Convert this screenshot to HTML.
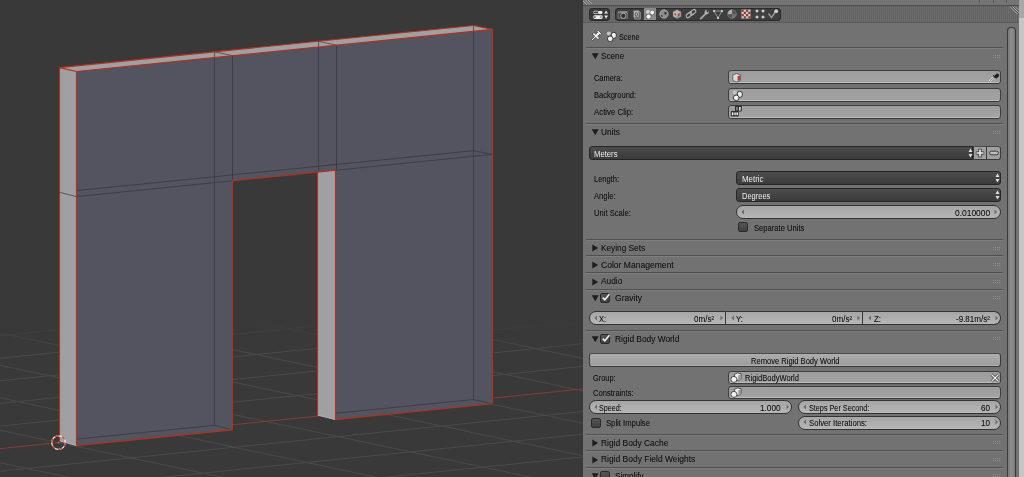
<!DOCTYPE html>
<html><head><meta charset="utf-8"><style>
html,body{margin:0;padding:0}
body{width:1024px;height:477px;overflow:hidden;position:relative;background:#393939;font-family:"Liberation Sans",sans-serif}
.t{position:absolute;white-space:nowrap;line-height:1;transform-origin:0 0;text-shadow:0 0 0.5px rgba(0,0,0,0.35)}
#panel{position:absolute;left:583px;top:0;width:441px;height:477px;background:#727272;overflow:hidden}
</style></head><body>
<svg width="583" height="477" style="position:absolute;left:0;top:0">
<defs><linearGradient id="gf" x1="0" y1="0" x2="0" y2="477" gradientUnits="userSpaceOnUse">
<stop offset="0" stop-color="#fff" stop-opacity="0"/><stop offset="0.667" stop-color="#fff" stop-opacity="0"/><stop offset="0.738" stop-color="#fff" stop-opacity="1"/><stop offset="1" stop-color="#fff" stop-opacity="1"/></linearGradient>
<mask id="gm"><rect width="583" height="477" fill="url(#gf)"/></mask></defs>
<rect width="583" height="477" fill="#393939"/>
<g mask="url(#gm)" stroke="#4a4a4a" stroke-width="1"><line x1="-2041.5" y1="387.6" x2="-320.7" y2="754.4"/><line x1="-1938.3" y1="377.0" x2="-216.6" y2="743.8"/><line x1="-1835.1" y1="366.5" x2="-112.4" y2="733.1"/><line x1="-1731.9" y1="355.9" x2="-8.3" y2="722.4"/><line x1="-1628.7" y1="345.3" x2="95.9" y2="711.7"/><line x1="-1525.5" y1="334.7" x2="200.0" y2="701.0"/><line x1="-1422.4" y1="324.2" x2="304.1" y2="690.4"/><line x1="-1319.2" y1="313.6" x2="408.3" y2="679.7"/><line x1="-1216.0" y1="303.0" x2="512.4" y2="669.0"/><line x1="-1112.9" y1="292.5" x2="616.5" y2="658.3"/><line x1="-1009.7" y1="281.9" x2="720.6" y2="647.7"/><line x1="-906.5" y1="271.3" x2="824.8" y2="637.0"/><line x1="-803.4" y1="260.8" x2="928.9" y2="626.3"/><line x1="-700.2" y1="250.2" x2="1033.0" y2="615.6"/><line x1="-597.1" y1="239.6" x2="1137.1" y2="604.9"/><line x1="-494.0" y1="229.1" x2="1241.2" y2="594.3"/><line x1="-390.8" y1="218.5" x2="1345.3" y2="583.6"/><line x1="-287.7" y1="207.9" x2="1449.4" y2="572.9"/><line x1="-184.6" y1="197.4" x2="1553.5" y2="562.3"/><line x1="-81.4" y1="186.8" x2="1657.6" y2="551.6"/><line x1="21.7" y1="176.2" x2="1761.6" y2="540.9"/><line x1="124.8" y1="165.7" x2="1865.7" y2="530.2"/><line x1="227.9" y1="155.1" x2="1969.8" y2="519.6"/><line x1="331.0" y1="144.5" x2="2073.9" y2="508.9"/><line x1="434.2" y1="134.0" x2="2177.9" y2="498.2"/><line x1="537.3" y1="123.4" x2="2282.0" y2="487.5"/><line x1="640.4" y1="112.8" x2="2386.1" y2="476.9"/><line x1="743.5" y1="102.3" x2="2490.1" y2="466.2"/><line x1="846.6" y1="91.7" x2="2594.2" y2="455.5"/><line x1="949.7" y1="81.2" x2="2698.2" y2="444.9"/><line x1="1052.7" y1="70.6" x2="2802.3" y2="434.2"/><line x1="1155.8" y1="60.0" x2="2906.3" y2="423.5"/><line x1="-2041.5" y1="387.6" x2="1258.9" y2="49.5"/><line x1="-1970.4" y1="402.7" x2="1331.2" y2="64.5"/><line x1="-1899.3" y1="417.9" x2="1403.6" y2="79.5"/><line x1="-1828.2" y1="433.1" x2="1476.0" y2="94.5"/><line x1="-1757.0" y1="448.3" x2="1548.5" y2="109.6"/><line x1="-1685.7" y1="463.4" x2="1621.0" y2="124.6"/><line x1="-1614.4" y1="478.7" x2="1693.6" y2="139.7"/><line x1="-1543.0" y1="493.9" x2="1766.3" y2="154.7"/><line x1="-1471.5" y1="509.1" x2="1839.0" y2="169.8"/><line x1="-1400.0" y1="524.3" x2="1911.8" y2="184.9"/><line x1="-1328.5" y1="539.6" x2="1984.6" y2="200.0"/><line x1="-1256.9" y1="554.9" x2="2057.5" y2="215.2"/><line x1="-1113.5" y1="585.4" x2="2203.4" y2="245.4"/><line x1="-1041.7" y1="600.7" x2="2276.5" y2="260.6"/><line x1="-969.9" y1="616.0" x2="2349.6" y2="275.8"/><line x1="-898.0" y1="631.4" x2="2422.8" y2="291.0"/><line x1="-826.0" y1="646.7" x2="2496.0" y2="306.2"/><line x1="-754.0" y1="662.1" x2="2569.3" y2="321.4"/><line x1="-681.9" y1="677.4" x2="2642.7" y2="336.6"/><line x1="-609.8" y1="692.8" x2="2716.1" y2="351.8"/><line x1="-537.6" y1="708.2" x2="2789.6" y2="367.1"/><line x1="-465.4" y1="723.6" x2="2863.1" y2="382.3"/><line x1="-393.1" y1="739.0" x2="2936.7" y2="397.6"/></g>
<line x1="-1185.2" y1="570.1" x2="2130.4" y2="230.3" stroke="#8a3a36" stroke-width="1"/>
<polygon points="76.5,71.5 492.5,29.4 492.5,403.8 335.5,419.6 335.5,170.3 232.5,180.8 232.5,429.9 76.5,445.6" fill="#53545f"/><polygon points="59.5,67.6 76.5,71.5 76.5,445.6 59.5,440.8" fill="#a0a0a2"/><polygon points="59.5,67.6 473.5,25.5 492.5,29.4 76.5,71.5" fill="#a0a0a2"/><polygon points="317.5,172.1 335.5,170.3 335.5,419.6 317.5,415.1" fill="#a0a0a2"/>
<g stroke="#34343a" stroke-opacity="0.75" stroke-width="0.9"><line x1="214.5" y1="51.8" x2="214.5" y2="425.3"/><line x1="232.5" y1="55.7" x2="232.5" y2="180.8"/><line x1="318.5" y1="41.3" x2="318.5" y2="172.0"/><line x1="336.5" y1="45.2" x2="336.5" y2="170.2"/><line x1="473.5" y1="25.5" x2="473.5" y2="399.5"/><line x1="76.5" y1="439.1" x2="214.5" y2="425.3"/><line x1="214.5" y1="425.3" x2="232.5" y2="429.9"/><line x1="335.5" y1="413.3" x2="473.5" y2="399.5"/><line x1="473.5" y1="399.5" x2="492.5" y2="403.8"/><line x1="76.5" y1="190.6" x2="473.4" y2="150.7"/><line x1="59.5" y1="192.3" x2="76.5" y2="196.6"/><line x1="76.5" y1="196.6" x2="232.5" y2="180.8"/><line x1="335.5" y1="170.3" x2="492.0" y2="154.4"/><line x1="473.4" y1="150.7" x2="492.0" y2="154.4"/><line x1="214.5" y1="51.8" x2="232.5" y2="55.7"/><line x1="318.5" y1="41.3" x2="336.5" y2="45.2"/></g>
<g stroke="#b8b8b8" stroke-width="1"><line x1="59.5" y1="440.8" x2="76.5" y2="445.6"/><line x1="317.5" y1="415.1" x2="335.5" y2="419.6"/></g>
<g stroke="#b3301f" stroke-width="1.1"><line x1="59.5" y1="67.6" x2="59.5" y2="440.8"/><line x1="76.5" y1="71.5" x2="76.5" y2="445.6"/><line x1="59.5" y1="67.6" x2="76.5" y2="71.5"/><line x1="59.5" y1="67.6" x2="473.5" y2="25.5"/><line x1="76.5" y1="71.5" x2="492.5" y2="29.4"/><line x1="492.5" y1="29.4" x2="492.5" y2="403.8"/><line x1="473.5" y1="25.5" x2="492.5" y2="29.4"/><line x1="76.5" y1="445.6" x2="232.5" y2="429.9"/><line x1="232.5" y1="429.9" x2="232.5" y2="180.8"/><line x1="232.5" y1="180.8" x2="317.5" y2="172.1"/><line x1="317.5" y1="415.1" x2="317.5" y2="172.1"/><line x1="335.5" y1="419.6" x2="335.5" y2="170.3"/><line x1="335.5" y1="419.6" x2="492.5" y2="403.8"/><line x1="317.5" y1="172.1" x2="335.5" y2="170.3"/></g>
<circle cx="58.5" cy="442.6" r="6.8" fill="none" stroke="#e8e8e8" stroke-width="1.2"/>
<circle cx="58.5" cy="442.6" r="6.8" fill="none" stroke="#c83828" stroke-width="1.2" stroke-dasharray="3.56 3.56"/>
<circle cx="58.5" cy="442.6" r="1" fill="#d06050"/>
</svg>
<div id="panel">
<div style="position:absolute;left:0.00px;top:0.00px;width:436.00px;height:5.50px;box-sizing:border-box;background:#757575"></div>
<div style="position:absolute;left:0.00px;top:5.00px;width:436.00px;height:18.00px;box-sizing:border-box;background:repeating-linear-gradient(90deg,#626262 0 1px,#6c6c6c 1px 2px);border-top:1px solid #4c4c4c;border-bottom:1px solid #5a5a5a"></div>
<svg style="position:absolute;left:0.00px;top:0.00px;overflow:visible" width="10" height="6"><path d="M0 1 L4 5 M2.5 0 L7.5 5 M5 0 L9 4" stroke="#b8b8b8" stroke-width="0.8"/><path d="M0 2.2 L3 5.2 M3.5 -0.2 L8.5 4.8" stroke="#4a4a4a" stroke-width="0.6"/></svg>
<svg style="position:absolute;left:426.00px;top:5.50px;overflow:visible" width="10" height="9"><path d="M1 0.5 L8.5 8 M3.5 0.5 L9.5 6.5 M6 0.5 L9.5 4" stroke="#c8c8c8" stroke-width="0.8"/><path d="M2.2 0.5 L9 7.3 M4.8 0.5 L9.5 5.2" stroke="#3a3a3a" stroke-width="0.6"/></svg>
<div style="position:absolute;left:395.50px;top:0.00px;width:0.80px;height:3.00px;box-sizing:border-box;background:#5a5a5a"></div>
<div style="position:absolute;left:409.50px;top:0.00px;width:0.80px;height:3.00px;box-sizing:border-box;background:#5a5a5a"></div>
<div style="position:absolute;left:422.50px;top:0.00px;width:0.80px;height:3.00px;box-sizing:border-box;background:#5a5a5a"></div>
<div style="position:absolute;left:6.00px;top:7.50px;width:21.00px;height:13.00px;box-sizing:border-box;border-radius:3px;background:#3a3a3a;border:1px solid #2a2a2a"></div>
<div style="position:absolute;left:32.00px;top:7.50px;width:166.00px;height:13.00px;box-sizing:border-box;border-radius:3px;background:#3e3e3e;border:1px solid #2a2a2a"></div>
<div style="position:absolute;left:60.90px;top:8.30px;width:12.00px;height:12.00px;box-sizing:border-box;background:#8c8c8c"></div>
<svg style="position:absolute;left:6.50px;top:7.80px;overflow:visible" width="21" height="13"><rect x="3.6" y="3.2" width="5.2" height="2.4" rx="1.2" fill="none" stroke="#cfcfcf" stroke-width="0.9"/><rect x="8.2" y="2.9" width="4.2" height="3" rx="1.2" fill="#ededed"/><rect x="3.4" y="7.2" width="9.2" height="3.8" rx="1.4" fill="#ededed"/><rect x="4.3" y="8.2" width="1.2" height="1.8" fill="#333"/><rect x="10.3" y="8.2" width="1.2" height="1.8" fill="#777"/><path d="M16.1 2.4 L18 5.6 L14.2 5.6Z M16.1 10.8 L18 7.6 L14.2 7.6Z" fill="#e6e6e6"/></svg>
<svg style="position:absolute;left:33.50px;top:8.30px;overflow:visible" width="12" height="12"><rect x="1" y="3.2" width="9.5" height="1.6" fill="#9a9a9a"/><circle cx="2.2" cy="4" r="0.8" fill="#c04030"/><rect x="1" y="5" width="9.5" height="5" fill="none" stroke="#8a8a8a" stroke-width="0.8"/><circle cx="6.3" cy="7.8" r="2.6" fill="#2d2d2d" stroke="#bbbbbb" stroke-width="0.9"/></svg>
<svg style="position:absolute;left:47.20px;top:8.30px;overflow:visible" width="12" height="12"><path d="M3.5 2.5 h5.5 v7 h-5.5z" fill="#b5b5b5" stroke="#666" stroke-width="0.6"/><path d="M9 4 h1.2 v7 h-5.5 v-1.5" fill="none" stroke="#aaa" stroke-width="0.9"/><path d="M6 4.2 q-1.8 2 0 4.6 M6.8 4.2 q1.5 2.2 -0.2 4.5" fill="none" stroke="#444" stroke-width="0.8"/></svg>
<svg style="position:absolute;left:60.90px;top:8.30px;overflow:visible" width="12" height="12"><circle cx="4" cy="4" r="2" fill="#d6d6d6"/><circle cx="8.2" cy="4.5" r="2.4" fill="#f2f2f2" stroke="#333" stroke-width="0.5"/><circle cx="4.6" cy="8.6" r="2.6" fill="#f5f5f5" stroke="#333" stroke-width="0.6"/></svg>
<svg style="position:absolute;left:74.60px;top:8.30px;overflow:visible" width="12" height="12"><circle cx="6" cy="6" r="4.2" fill="#8c8c8c" stroke="#b0b0b0" stroke-width="0.8"/><path d="M6.2 4 q2 -0.5 2.8 1.2 q-0.6 1.6 -2.2 1.2z M3.2 6.8 q1.2 0 1.6 1.6 q-0.8 0.8 -1.6 0z" fill="#333"/></svg>
<svg style="position:absolute;left:88.30px;top:8.30px;overflow:visible" width="12" height="12"><path d="M6 1.8 L10 3.8 L10 8.6 L6 10.6 L2 8.6 L2 3.8Z" fill="#b8b8b8" stroke="#777" stroke-width="0.5"/><path d="M6 6 L10 3.8 L10 8.6 L6 10.6Z" fill="#9a9a9a"/><path d="M3.5 5 l1.5 0.8 v2 l-1.5 -0.8z M7 6 l1.6 -0.8 v2.4 l-1.6 0.8z M5.5 8.6 l1 0.5 v1 l-1 -0.5z" fill="#c8382a"/></svg>
<svg style="position:absolute;left:102.00px;top:8.30px;overflow:visible" width="12" height="12"><rect x="0.8" y="5.2" width="6.4" height="3.6" rx="1.8" transform="rotate(-40 4 7)" fill="none" stroke="#b5b5b5" stroke-width="1.1"/><rect x="4.8" y="2.4" width="6.4" height="3.6" rx="1.8" transform="rotate(-40 8 4.2)" fill="none" stroke="#b5b5b5" stroke-width="1.1"/></svg>
<svg style="position:absolute;left:115.70px;top:8.30px;overflow:visible" width="12" height="12"><path d="M1.8 10.6 L7 5.4" stroke="#a8a8a8" stroke-width="1.9" stroke-linecap="round"/><path d="M6.2 6.2 a2.9 2.9 0 0 1 2.2 -4.8 l-1.2 1.9 l1.3 1.1 l1.6 -1.4 a2.9 2.9 0 0 1 -3.9 3.2z" fill="#b0b0b0"/></svg>
<svg style="position:absolute;left:129.40px;top:8.30px;overflow:visible" width="12" height="12"><path d="M2 3 L10 3 L6 10Z" fill="none" stroke="#aaa" stroke-width="0.8"/><circle cx="2" cy="3" r="1.1" fill="#ddd"/><circle cx="10" cy="3" r="1.1" fill="#ddd"/><circle cx="6" cy="10" r="1.1" fill="#ddd"/></svg>
<svg style="position:absolute;left:143.10px;top:8.30px;overflow:visible" width="12" height="12"><circle cx="6" cy="6" r="4.3" fill="#555" stroke="#8a8a8a" stroke-width="0.6"/><path d="M6 1.7 a4.3 4.3 0 0 0 -4.3 4.3 h4.3z" fill="#b0b0b0"/><path d="M6 6 h4.3 a4.3 4.3 0 0 1 -4.3 4.3z" fill="#777"/><circle cx="7.8" cy="7.6" r="0.9" fill="#c04030"/></svg>
<svg style="position:absolute;left:156.80px;top:8.30px;overflow:visible" width="12" height="12"><rect x="1.5" y="1.5" width="9" height="9" fill="#cfcfcf"/><path d="M1.5 1.5h2.25v2.25h-2.25z M6 1.5h2.25v2.25h-2.25z M3.75 3.75h2.25v2.25h-2.25z M8.25 3.75h2.25v2.25h-2.25z M1.5 6h2.25v2.25h-2.25z M6 6h2.25v2.25h-2.25z M3.75 8.25h2.25v2.25h-2.25z M8.25 8.25h2.25v2.25h-2.25z" fill="#8e3a30"/></svg>
<svg style="position:absolute;left:170.50px;top:8.30px;overflow:visible" width="12" height="12"><path d="M3 0.8v4.4 M0.8 3h4.4 M9 0.8v4.4 M6.8 3h4.4 M3 6.8v4.4 M0.8 9h4.4 M9 6.8v4.4 M6.8 9h4.4" stroke="#b0b0b0" stroke-width="0.8"/><circle cx="3" cy="3" r="1.1" fill="#ddd"/><circle cx="9" cy="3" r="1.1" fill="#ddd"/><circle cx="3" cy="9" r="1.1" fill="#ddd"/><circle cx="9" cy="9" r="1.1" fill="#ddd"/></svg>
<svg style="position:absolute;left:184.20px;top:8.30px;overflow:visible" width="12" height="12"><path d="M1.5 5.5 L4.5 9.5 L9 3" fill="none" stroke="#9a9a9a" stroke-width="1.4"/><circle cx="9.2" cy="3.2" r="1.9" fill="#cfcfcf"/></svg>
<svg style="position:absolute;left:7.00px;top:30.00px;overflow:visible" width="12" height="12"><g transform="rotate(45 6 6)"><path d="M3.6 0.4 h4.8 v1.8 h-1 v2.8 h2.6 v2.2 h-3.2 v4.4 h-1.6 v-4.4 h-3.2 v-2.2 h2.6 v-2.8 h-1z" fill="#f4f4f4" stroke="#2a2a2a" stroke-width="0.7" stroke-linejoin="round"/></g></svg>
<svg style="position:absolute;left:22.50px;top:30.50px;overflow:visible" width="11" height="11"><circle cx="2.8" cy="2.6" r="2" fill="#c4c4c4"/><rect x="5.3" y="1.4" width="5" height="6" rx="2.3" fill="#eeeeee" stroke="#2a2a2a" stroke-width="0.9"/><circle cx="4.2" cy="7.8" r="2.8" fill="#f2f2f2" stroke="#2a2a2a" stroke-width="0.9"/></svg>
<div style="position:absolute;left:423.50px;top:27.00px;width:9.50px;height:450.00px;box-sizing:border-box;border:1px solid #3a3a3a;border-bottom:none;border-radius:4px 4px 0 0;background:linear-gradient(90deg,#7a7a7a,#8e8e8e,#7a7a7a)"></div>
<div style="position:absolute;left:436.00px;top:0.00px;width:5.00px;height:477.00px;box-sizing:border-box;background:#c6c6c6"></div>
<div style="position:absolute;left:436.00px;top:0.00px;width:5.00px;height:18.00px;box-sizing:border-box;background:#a8a8a8"></div>
<div class="t" style="left:36.00px;top:32.67px;font-size:8.3px;color:#141414;transform:scaleX(0.8754)">Scene</div>
<div style="position:absolute;left:3.00px;top:47.00px;width:417.00px;height:1.00px;box-sizing:border-box;background:#505050"></div>
<div style="position:absolute;left:3.00px;top:48.00px;width:417.00px;height:1.00px;box-sizing:border-box;background:#7e7e7e"></div>
<svg style="position:absolute;left:9.00px;top:52.30px" width="8" height="8"><path d="M-0.2 1.3 L6.7 1.3 L3.25 7.3Z" fill="#1e1e1e"/></svg>
<div class="t" style="left:17.80px;top:52.12px;font-size:8.6px;color:#141414;transform:scaleX(0.9515)">Scene</div>
<svg style="position:absolute;left:410.00px;top:55.00px" width="8" height="4"><rect x="0" y="0" width="1" height="1" fill="#8e8e8e"/><rect x="0" y="2" width="1" height="1" fill="#8e8e8e"/><rect x="2" y="0" width="1" height="1" fill="#8e8e8e"/><rect x="2" y="2" width="1" height="1" fill="#8e8e8e"/><rect x="4" y="0" width="1" height="1" fill="#8e8e8e"/><rect x="4" y="2" width="1" height="1" fill="#8e8e8e"/><rect x="6" y="0" width="1" height="1" fill="#8e8e8e"/><rect x="6" y="2" width="1" height="1" fill="#8e8e8e"/></svg>
<div class="t" style="left:10.70px;top:73.87px;font-size:8.3px;color:#141414;transform:scaleX(0.8956)">Camera:</div>
<div class="t" style="left:10.70px;top:90.77px;font-size:8.3px;color:#141414;transform:scaleX(0.9034)">Background:</div>
<div class="t" style="left:10.70px;top:107.77px;font-size:8.3px;color:#141414;transform:scaleX(0.9467)">Active Clip:</div>
<div style="position:absolute;left:145.00px;top:70.00px;width:273.00px;height:14.00px;box-sizing:border-box;border:1px solid #3e3e3e;border-radius:3px;background:linear-gradient(#9d9d9d,#a3a3a3)"></div>
<div style="position:absolute;left:147.00px;top:82.00px;width:269.00px;height:1.00px;box-sizing:border-box;background:#c4c4c4;opacity:0.7"></div>
<div style="position:absolute;left:147.00px;top:84.00px;width:269.00px;height:1.00px;box-sizing:border-box;background:#666;opacity:0.5"></div>
<div style="position:absolute;left:145.00px;top:88.00px;width:273.00px;height:14.00px;box-sizing:border-box;border:1px solid #3e3e3e;border-radius:3px;background:linear-gradient(#9d9d9d,#a3a3a3)"></div>
<div style="position:absolute;left:147.00px;top:100.00px;width:269.00px;height:1.00px;box-sizing:border-box;background:#c4c4c4;opacity:0.7"></div>
<div style="position:absolute;left:147.00px;top:102.00px;width:269.00px;height:1.00px;box-sizing:border-box;background:#666;opacity:0.5"></div>
<div style="position:absolute;left:145.00px;top:105.00px;width:273.00px;height:14.00px;box-sizing:border-box;border:1px solid #3e3e3e;border-radius:3px;background:linear-gradient(#9d9d9d,#a3a3a3)"></div>
<div style="position:absolute;left:147.00px;top:117.00px;width:269.00px;height:1.00px;box-sizing:border-box;background:#c4c4c4;opacity:0.7"></div>
<div style="position:absolute;left:147.00px;top:119.00px;width:269.00px;height:1.00px;box-sizing:border-box;background:#666;opacity:0.5"></div>
<svg style="position:absolute;left:148.80px;top:72.50px;overflow:visible" width="10" height="10"><path d="M4.5 0.5 L8.5 2 L8.5 7.5 L4.5 9 L0.8 7.5 L0.8 2Z" fill="#d8d8d8" stroke="#444" stroke-width="0.7"/><path d="M5.6 3.2 L8 2.4 L8 7 L5.6 8z" fill="#c83a2a"/></svg>
<svg style="position:absolute;left:148.80px;top:89.50px;overflow:visible" width="11" height="11"><circle cx="2.8" cy="2.6" r="2" fill="#c4c4c4"/><rect x="5.3" y="1.4" width="5" height="6" rx="2.3" fill="#eeeeee" stroke="#2a2a2a" stroke-width="0.9"/><circle cx="4.2" cy="7.8" r="2.8" fill="#f2f2f2" stroke="#2a2a2a" stroke-width="0.9"/></svg>
<svg style="position:absolute;left:147.00px;top:105.00px;overflow:visible" width="12" height="12"><rect x="5" y="0.8" width="6.8" height="5.8" rx="0.8" fill="#2e2e2e"/><rect x="6.2" y="2" width="1.4" height="3.4" fill="#9a9a9a"/><rect x="9" y="2" width="1.6" height="3.6" fill="#e8e8e8"/><rect x="0.8" y="6" width="8" height="5.5" rx="0.8" fill="#2e2e2e"/><rect x="1.8" y="7.4" width="1.6" height="2.8" fill="#f0f0f0"/><rect x="4.2" y="7.4" width="1.6" height="2.8" fill="#d8d8d8"/><rect x="6.4" y="7.4" width="1.6" height="2.8" fill="#e8e8e8"/></svg>
<svg style="position:absolute;left:405.30px;top:72.00px;overflow:visible" width="11" height="11"><path d="M1.3 9.7 L6 5" stroke="#eee" stroke-width="1.7"/><path d="M1.3 9.7 L6 5" stroke="#444" stroke-width="0.6"/><path d="M5.2 3.4 L7.6 5.8 M6.4 4.6 L8.8 2.2 a1.2 1.2 0 0 1 1.6 1.6 L8 6.2" fill="#222" stroke="#222" stroke-width="1.3"/></svg>
<div style="position:absolute;left:3.00px;top:122.70px;width:417.00px;height:1.00px;box-sizing:border-box;background:#505050"></div>
<div style="position:absolute;left:3.00px;top:123.70px;width:417.00px;height:1.00px;box-sizing:border-box;background:#7e7e7e"></div>
<svg style="position:absolute;left:9.00px;top:128.00px" width="8" height="8"><path d="M-0.2 1.3 L6.7 1.3 L3.25 7.3Z" fill="#1e1e1e"/></svg>
<div class="t" style="left:17.80px;top:127.72px;font-size:8.6px;color:#141414;transform:scaleX(0.9646)">Units</div>
<svg style="position:absolute;left:410.00px;top:131.00px" width="8" height="4"><rect x="0" y="0" width="1" height="1" fill="#8e8e8e"/><rect x="0" y="2" width="1" height="1" fill="#8e8e8e"/><rect x="2" y="0" width="1" height="1" fill="#8e8e8e"/><rect x="2" y="2" width="1" height="1" fill="#8e8e8e"/><rect x="4" y="0" width="1" height="1" fill="#8e8e8e"/><rect x="4" y="2" width="1" height="1" fill="#8e8e8e"/><rect x="6" y="0" width="1" height="1" fill="#8e8e8e"/><rect x="6" y="2" width="1" height="1" fill="#8e8e8e"/></svg>
<div style="position:absolute;left:6.00px;top:146.00px;width:384.00px;height:14.00px;box-sizing:border-box;border:1px solid #262626;border-radius:3px 0 0 3px;background:linear-gradient(#4d4d4d,#3b3b3b)"></div>
<div class="t" style="left:10.50px;top:149.77px;font-size:8.3px;color:#f4f4f4;transform:scaleX(0.9265)">Meters</div>
<svg style="position:absolute;left:384.50px;top:148.00px" width="5" height="10"><path d="M2.5 0.5 L4.5 4 L0.5 4Z M2.5 9.5 L4.5 6 L0.5 6Z" fill="#e0e0e0"/></svg>
<div style="position:absolute;left:390.00px;top:146.00px;width:14.00px;height:14.00px;box-sizing:border-box;border:1px solid #3a3a3a;border-top-color:#4a4a4a;border-radius:3px;background:linear-gradient(#adadad,#9c9c9c);border-radius:0;background:#a0a0a0"></div>
<div style="position:absolute;left:404.00px;top:146.00px;width:14.00px;height:14.00px;box-sizing:border-box;border:1px solid #3a3a3a;border-top-color:#4a4a4a;border-radius:3px;background:linear-gradient(#adadad,#9c9c9c);border-radius:0 3px 3px 0;background:#a0a0a0;border-left:none"></div>
<svg style="position:absolute;left:392.00px;top:147.80px;overflow:visible" width="10" height="10"><path d="M5 0.8 V9.2 M0.8 5 H9.2" stroke="#333" stroke-width="3.2"/><path d="M5 1.4 V8.6 M1.4 5 H8.6" stroke="#f2f2f2" stroke-width="1.6"/></svg>
<svg style="position:absolute;left:406.00px;top:147.80px;overflow:visible" width="10" height="10"><rect x="0.6" y="3.2" width="8.8" height="3.6" rx="1.8" fill="#bdbdbd" stroke="#333" stroke-width="0.9"/></svg>
<div class="t" style="left:10.70px;top:175.07px;font-size:8.3px;color:#141414;transform:scaleX(0.9065)">Length:</div>
<div class="t" style="left:10.70px;top:191.77px;font-size:8.3px;color:#141414;transform:scaleX(0.9136)">Angle:</div>
<div class="t" style="left:10.70px;top:208.77px;font-size:8.3px;color:#141414;transform:scaleX(0.9194)">Unit Scale:</div>
<div style="position:absolute;left:153.00px;top:171.00px;width:265.00px;height:14.00px;box-sizing:border-box;border:1px solid #262626;border-radius:3px;background:linear-gradient(#4d4d4d,#3b3b3b)"></div>
<div class="t" style="left:159.00px;top:175.07px;font-size:8.3px;color:#f4f4f4;transform:scaleX(0.9516)">Metric</div>
<svg style="position:absolute;left:411.50px;top:173.00px" width="5" height="10"><path d="M2.5 0.5 L4.5 4 L0.5 4Z M2.5 9.5 L4.5 6 L0.5 6Z" fill="#e0e0e0"/></svg>
<div style="position:absolute;left:153.00px;top:188.00px;width:265.00px;height:14.00px;box-sizing:border-box;border:1px solid #262626;border-radius:3px;background:linear-gradient(#4d4d4d,#3b3b3b)"></div>
<div class="t" style="left:159.00px;top:191.77px;font-size:8.3px;color:#f4f4f4;transform:scaleX(0.9021)">Degrees</div>
<svg style="position:absolute;left:411.50px;top:190.30px" width="5" height="10"><path d="M2.5 0.5 L4.5 4 L0.5 4Z M2.5 9.5 L4.5 6 L0.5 6Z" fill="#e0e0e0"/></svg>
<div style="position:absolute;left:153.00px;top:205.00px;width:265.00px;height:14.00px;box-sizing:border-box;border:1px solid #333;border-radius:7.0px;background:linear-gradient(#a6a6a6,#b6b6b6);"></div>
<svg style="position:absolute;left:157.50px;top:209.00px" width="4" height="6"><path d="M3 0.5 L0.5 3 L3 5.5Z" fill="#6a6a6a"/></svg>
<svg style="position:absolute;left:411.30px;top:209.00px" width="4" height="6"><path d="M0.5 0.5 L3 3 L0.5 5.5Z" fill="#6a6a6a"/></svg>
<div class="t" style="left:371.70px;top:208.57px;font-size:8.3px;color:#141414;transform:scaleX(1.0169)">0.010000</div>
<div style="position:absolute;left:155.00px;top:222.00px;width:10.00px;height:10.00px;box-sizing:border-box;border:1px solid #2a2a2a;border-radius:2px;background:linear-gradient(#555,#404040)"></div>
<div class="t" style="left:170.70px;top:223.97px;font-size:8.3px;color:#141414;transform:scaleX(0.9180)">Separate Units</div>
<div style="position:absolute;left:3.00px;top:238.70px;width:417.00px;height:1.00px;box-sizing:border-box;background:#505050"></div>
<div style="position:absolute;left:3.00px;top:239.70px;width:417.00px;height:1.00px;box-sizing:border-box;background:#7e7e7e"></div>
<svg style="position:absolute;left:9.00px;top:244.00px" width="8" height="8"><path d="M0.3 0.6 L6.2 4 L0.3 7.4Z" fill="#1e1e1e"/></svg>
<div class="t" style="left:17.60px;top:243.62px;font-size:8.6px;color:#141414;transform:scaleX(0.9610)">Keying Sets</div>
<svg style="position:absolute;left:410.00px;top:247.00px" width="8" height="4"><rect x="0" y="0" width="1" height="1" fill="#8e8e8e"/><rect x="0" y="2" width="1" height="1" fill="#8e8e8e"/><rect x="2" y="0" width="1" height="1" fill="#8e8e8e"/><rect x="2" y="2" width="1" height="1" fill="#8e8e8e"/><rect x="4" y="0" width="1" height="1" fill="#8e8e8e"/><rect x="4" y="2" width="1" height="1" fill="#8e8e8e"/><rect x="6" y="0" width="1" height="1" fill="#8e8e8e"/><rect x="6" y="2" width="1" height="1" fill="#8e8e8e"/></svg>
<div style="position:absolute;left:3.00px;top:255.30px;width:417.00px;height:1.00px;box-sizing:border-box;background:#505050"></div>
<div style="position:absolute;left:3.00px;top:256.30px;width:417.00px;height:1.00px;box-sizing:border-box;background:#7e7e7e"></div>
<svg style="position:absolute;left:9.00px;top:261.00px" width="8" height="8"><path d="M0.3 0.6 L6.2 4 L0.3 7.4Z" fill="#1e1e1e"/></svg>
<div class="t" style="left:17.60px;top:260.62px;font-size:8.6px;color:#141414;transform:scaleX(0.9941)">Color Management</div>
<svg style="position:absolute;left:410.00px;top:263.00px" width="8" height="4"><rect x="0" y="0" width="1" height="1" fill="#8e8e8e"/><rect x="0" y="2" width="1" height="1" fill="#8e8e8e"/><rect x="2" y="0" width="1" height="1" fill="#8e8e8e"/><rect x="2" y="2" width="1" height="1" fill="#8e8e8e"/><rect x="4" y="0" width="1" height="1" fill="#8e8e8e"/><rect x="4" y="2" width="1" height="1" fill="#8e8e8e"/><rect x="6" y="0" width="1" height="1" fill="#8e8e8e"/><rect x="6" y="2" width="1" height="1" fill="#8e8e8e"/></svg>
<div style="position:absolute;left:3.00px;top:271.90px;width:417.00px;height:1.00px;box-sizing:border-box;background:#505050"></div>
<div style="position:absolute;left:3.00px;top:272.90px;width:417.00px;height:1.00px;box-sizing:border-box;background:#7e7e7e"></div>
<svg style="position:absolute;left:9.00px;top:277.50px" width="8" height="8"><path d="M0.3 0.6 L6.2 4 L0.3 7.4Z" fill="#1e1e1e"/></svg>
<div class="t" style="left:17.60px;top:277.02px;font-size:8.6px;color:#141414;transform:scaleX(0.9684)">Audio</div>
<svg style="position:absolute;left:410.00px;top:280.00px" width="8" height="4"><rect x="0" y="0" width="1" height="1" fill="#8e8e8e"/><rect x="0" y="2" width="1" height="1" fill="#8e8e8e"/><rect x="2" y="0" width="1" height="1" fill="#8e8e8e"/><rect x="2" y="2" width="1" height="1" fill="#8e8e8e"/><rect x="4" y="0" width="1" height="1" fill="#8e8e8e"/><rect x="4" y="2" width="1" height="1" fill="#8e8e8e"/><rect x="6" y="0" width="1" height="1" fill="#8e8e8e"/><rect x="6" y="2" width="1" height="1" fill="#8e8e8e"/></svg>
<div style="position:absolute;left:3.00px;top:288.50px;width:417.00px;height:1.00px;box-sizing:border-box;background:#505050"></div>
<div style="position:absolute;left:3.00px;top:289.50px;width:417.00px;height:1.00px;box-sizing:border-box;background:#7e7e7e"></div>
<svg style="position:absolute;left:9.00px;top:293.50px" width="8" height="8"><path d="M-0.2 1.3 L6.7 1.3 L3.25 7.3Z" fill="#1e1e1e"/></svg>
<div style="position:absolute;left:17.00px;top:293.00px;width:10.00px;height:10.00px;box-sizing:border-box;border:1px solid #2a2a2a;border-radius:2px;background:linear-gradient(#555,#404040)"></div>
<svg style="position:absolute;left:17.00px;top:291.00px" width="12" height="12"><path d="M2.6 6.6 L4.8 8.8 L9.4 3.2" stroke="#f2f2f2" stroke-width="1.5" fill="none"/></svg>
<div class="t" style="left:31.60px;top:293.72px;font-size:8.6px;color:#141414;transform:scaleX(0.9950)">Gravity</div>
<svg style="position:absolute;left:410.00px;top:296.00px" width="8" height="4"><rect x="0" y="0" width="1" height="1" fill="#8e8e8e"/><rect x="0" y="2" width="1" height="1" fill="#8e8e8e"/><rect x="2" y="0" width="1" height="1" fill="#8e8e8e"/><rect x="2" y="2" width="1" height="1" fill="#8e8e8e"/><rect x="4" y="0" width="1" height="1" fill="#8e8e8e"/><rect x="4" y="2" width="1" height="1" fill="#8e8e8e"/><rect x="6" y="0" width="1" height="1" fill="#8e8e8e"/><rect x="6" y="2" width="1" height="1" fill="#8e8e8e"/></svg>
<div style="position:absolute;left:6.00px;top:311.00px;width:137.00px;height:14.00px;box-sizing:border-box;border:1px solid #333;border-radius:7.0px;background:linear-gradient(#a6a6a6,#b6b6b6);border-radius:7px 0 0 7px"></div>
<div style="position:absolute;left:143.00px;top:311.00px;width:137.00px;height:14.00px;box-sizing:border-box;border:1px solid #333;border-radius:7.0px;background:linear-gradient(#a6a6a6,#b6b6b6);border-radius:0;border-left:none"></div>
<div style="position:absolute;left:280.00px;top:311.00px;width:138.00px;height:14.00px;box-sizing:border-box;border:1px solid #333;border-radius:7.0px;background:linear-gradient(#a6a6a6,#b6b6b6);border-radius:0 7px 7px 0;border-left:none"></div>
<div style="position:absolute;left:142.00px;top:312.00px;width:1.00px;height:12.00px;box-sizing:border-box;background:#3a3a3a"></div>
<div style="position:absolute;left:279.00px;top:312.00px;width:1.00px;height:12.00px;box-sizing:border-box;background:#3a3a3a"></div>
<svg style="position:absolute;left:10.50px;top:315.00px" width="4" height="6"><path d="M3 0.5 L0.5 3 L3 5.5Z" fill="#6a6a6a"/></svg>
<div class="t" style="left:15.70px;top:315.17px;font-size:8.3px;color:#141414;transform:scaleX(0.8926)">X:</div>
<div class="t" style="left:111.30px;top:315.17px;font-size:8.3px;color:#141414;transform:scaleX(0.9687)">0m/s²</div>
<svg style="position:absolute;left:136.50px;top:315.00px" width="4" height="6"><path d="M0.5 0.5 L3 3 L0.5 5.5Z" fill="#6a6a6a"/></svg>
<svg style="position:absolute;left:147.50px;top:315.00px" width="4" height="6"><path d="M3 0.5 L0.5 3 L3 5.5Z" fill="#6a6a6a"/></svg>
<div class="t" style="left:152.90px;top:315.17px;font-size:8.3px;color:#141414;transform:scaleX(0.9479)">Y:</div>
<div class="t" style="left:248.60px;top:315.17px;font-size:8.3px;color:#141414;transform:scaleX(0.9687)">0m/s²</div>
<svg style="position:absolute;left:273.50px;top:315.00px" width="4" height="6"><path d="M0.5 0.5 L3 3 L0.5 5.5Z" fill="#6a6a6a"/></svg>
<svg style="position:absolute;left:285.00px;top:315.00px" width="4" height="6"><path d="M3 0.5 L0.5 3 L3 5.5Z" fill="#6a6a6a"/></svg>
<div class="t" style="left:290.60px;top:315.17px;font-size:8.3px;color:#141414;transform:scaleX(0.9491)">Z:</div>
<div class="t" style="left:373.00px;top:315.07px;font-size:8.3px;color:#141414;transform:scaleX(0.9672)">-9.81m/s²</div>
<svg style="position:absolute;left:411.50px;top:315.00px" width="4" height="6"><path d="M0.5 0.5 L3 3 L0.5 5.5Z" fill="#6a6a6a"/></svg>
<div style="position:absolute;left:3.00px;top:330.10px;width:417.00px;height:1.00px;box-sizing:border-box;background:#505050"></div>
<div style="position:absolute;left:3.00px;top:331.10px;width:417.00px;height:1.00px;box-sizing:border-box;background:#7e7e7e"></div>
<svg style="position:absolute;left:9.00px;top:335.00px" width="8" height="8"><path d="M-0.2 1.3 L6.7 1.3 L3.25 7.3Z" fill="#1e1e1e"/></svg>
<div style="position:absolute;left:17.00px;top:334.00px;width:10.00px;height:10.00px;box-sizing:border-box;border:1px solid #2a2a2a;border-radius:2px;background:linear-gradient(#555,#404040)"></div>
<svg style="position:absolute;left:17.00px;top:332.00px" width="12" height="12"><path d="M2.6 6.6 L4.8 8.8 L9.4 3.2" stroke="#f2f2f2" stroke-width="1.5" fill="none"/></svg>
<div class="t" style="left:32.00px;top:334.62px;font-size:8.6px;color:#141414;transform:scaleX(0.9717)">Rigid Body World</div>
<svg style="position:absolute;left:410.00px;top:337.00px" width="8" height="4"><rect x="0" y="0" width="1" height="1" fill="#8e8e8e"/><rect x="0" y="2" width="1" height="1" fill="#8e8e8e"/><rect x="2" y="0" width="1" height="1" fill="#8e8e8e"/><rect x="2" y="2" width="1" height="1" fill="#8e8e8e"/><rect x="4" y="0" width="1" height="1" fill="#8e8e8e"/><rect x="4" y="2" width="1" height="1" fill="#8e8e8e"/><rect x="6" y="0" width="1" height="1" fill="#8e8e8e"/><rect x="6" y="2" width="1" height="1" fill="#8e8e8e"/></svg>
<div style="position:absolute;left:6.00px;top:353.00px;width:412.00px;height:14.00px;box-sizing:border-box;border:1px solid #3a3a3a;border-top-color:#4a4a4a;border-radius:3px;background:linear-gradient(#adadad,#9c9c9c);"></div>
<div style="position:absolute;left:8.00px;top:365.00px;width:408.00px;height:1.00px;box-sizing:border-box;background:#b8b8b8;opacity:0.6"></div>
<div class="t" style="left:167.60px;top:357.17px;font-size:8.3px;color:#141414;transform:scaleX(0.9117)">Remove Rigid Body World</div>
<div class="t" style="left:10.40px;top:373.77px;font-size:8.3px;color:#141414;transform:scaleX(0.8907)">Group:</div>
<div class="t" style="left:10.40px;top:388.57px;font-size:8.3px;color:#141414;transform:scaleX(0.9169)">Constraints:</div>
<div style="position:absolute;left:145.00px;top:371.00px;width:273.00px;height:13.00px;box-sizing:border-box;border:1px solid #3e3e3e;border-radius:3px;background:linear-gradient(#9d9d9d,#a3a3a3)"></div>
<div style="position:absolute;left:147.00px;top:382.00px;width:269.00px;height:1.00px;box-sizing:border-box;background:#c4c4c4;opacity:0.7"></div>
<div style="position:absolute;left:147.00px;top:384.00px;width:269.00px;height:1.00px;box-sizing:border-box;background:#666;opacity:0.5"></div>
<div style="position:absolute;left:145.00px;top:386.00px;width:273.00px;height:13.00px;box-sizing:border-box;border:1px solid #3e3e3e;border-radius:3px;background:linear-gradient(#9d9d9d,#a3a3a3)"></div>
<div style="position:absolute;left:147.00px;top:397.00px;width:269.00px;height:1.00px;box-sizing:border-box;background:#c4c4c4;opacity:0.7"></div>
<div style="position:absolute;left:147.00px;top:399.00px;width:269.00px;height:1.00px;box-sizing:border-box;background:#666;opacity:0.5"></div>
<div class="t" style="left:161.90px;top:373.77px;font-size:8.3px;color:#141414;transform:scaleX(0.9098)">RigidBodyWorld</div>
<svg style="position:absolute;left:147.00px;top:371.50px;overflow:visible" width="12" height="11"><path d="M4.4 2.4 L7.6 0.8 L11.2 1.9 L11.2 6.9 L8.2 8.4 L4.4 7.4Z" fill="#ececec" stroke="#2e2e2e" stroke-width="0.8" stroke-linejoin="round"/><path d="M8.2 3.4 L11.2 1.9 L11.2 6.9 L8.2 8.4Z" fill="#9a9a9a"/><circle cx="3.9" cy="7.4" r="3" fill="#f2f2f2" stroke="#2e2e2e" stroke-width="0.8"/></svg>
<svg style="position:absolute;left:147.00px;top:386.60px;overflow:visible" width="12" height="11"><path d="M4.4 2.4 L7.6 0.8 L11.2 1.9 L11.2 6.9 L8.2 8.4 L4.4 7.4Z" fill="#ececec" stroke="#2e2e2e" stroke-width="0.8" stroke-linejoin="round"/><path d="M8.2 3.4 L11.2 1.9 L11.2 6.9 L8.2 8.4Z" fill="#9a9a9a"/><circle cx="3.9" cy="7.4" r="3" fill="#f2f2f2" stroke="#2e2e2e" stroke-width="0.8"/></svg>
<svg style="position:absolute;left:407.00px;top:373.00px;overflow:visible" width="10" height="10"><path d="M1.5 1.5 L8.5 8.5 M8.5 1.5 L1.5 8.5" stroke="#333" stroke-width="2.6"/><path d="M1.5 1.5 L8.5 8.5 M8.5 1.5 L1.5 8.5" stroke="#f0f0f0" stroke-width="1.3"/></svg>
<div style="position:absolute;left:6.00px;top:400.00px;width:203.00px;height:14.00px;box-sizing:border-box;border:1px solid #333;border-radius:7.0px;background:linear-gradient(#a6a6a6,#b6b6b6);"></div>
<svg style="position:absolute;left:10.50px;top:404.30px" width="4" height="6"><path d="M3 0.5 L0.5 3 L3 5.5Z" fill="#6a6a6a"/></svg>
<div class="t" style="left:16.00px;top:403.77px;font-size:8.3px;color:#141414;transform:scaleX(0.8630)">Speed:</div>
<div class="t" style="left:177.20px;top:403.77px;font-size:8.3px;color:#141414;transform:scaleX(0.9919)">1.000</div>
<svg style="position:absolute;left:202.50px;top:404.30px" width="4" height="6"><path d="M0.5 0.5 L3 3 L0.5 5.5Z" fill="#6a6a6a"/></svg>
<div style="position:absolute;left:215.00px;top:400.00px;width:203.00px;height:14.00px;box-sizing:border-box;border:1px solid #333;border-radius:7.0px;background:linear-gradient(#a6a6a6,#b6b6b6);"></div>
<svg style="position:absolute;left:219.50px;top:404.30px" width="4" height="6"><path d="M3 0.5 L0.5 3 L3 5.5Z" fill="#6a6a6a"/></svg>
<div class="t" style="left:225.80px;top:403.97px;font-size:8.3px;color:#141414;transform:scaleX(0.8728)">Steps Per Second:</div>
<div class="t" style="left:397.80px;top:403.97px;font-size:8.3px;color:#141414;transform:scaleX(0.9750)">60</div>
<svg style="position:absolute;left:411.50px;top:404.30px" width="4" height="6"><path d="M0.5 0.5 L3 3 L0.5 5.5Z" fill="#6a6a6a"/></svg>
<div style="position:absolute;left:8.00px;top:418.00px;width:10.00px;height:10.00px;box-sizing:border-box;border:1px solid #2a2a2a;border-radius:2px;background:linear-gradient(#555,#404040)"></div>
<div class="t" style="left:23.00px;top:418.87px;font-size:8.3px;color:#141414;transform:scaleX(0.9261)">Split Impulse</div>
<div style="position:absolute;left:215.00px;top:416.00px;width:203.00px;height:14.00px;box-sizing:border-box;border:1px solid #333;border-radius:7.0px;background:linear-gradient(#a6a6a6,#b6b6b6);"></div>
<svg style="position:absolute;left:219.50px;top:419.30px" width="4" height="6"><path d="M3 0.5 L0.5 3 L3 5.5Z" fill="#6a6a6a"/></svg>
<div class="t" style="left:225.80px;top:419.17px;font-size:8.3px;color:#141414;transform:scaleX(0.9314)">Solver Iterations:</div>
<div class="t" style="left:397.80px;top:419.17px;font-size:8.3px;color:#141414;transform:scaleX(0.9750)">10</div>
<svg style="position:absolute;left:411.50px;top:419.30px" width="4" height="6"><path d="M0.5 0.5 L3 3 L0.5 5.5Z" fill="#6a6a6a"/></svg>
<div style="position:absolute;left:3.00px;top:433.70px;width:417.00px;height:1.00px;box-sizing:border-box;background:#505050"></div>
<div style="position:absolute;left:3.00px;top:434.70px;width:417.00px;height:1.00px;box-sizing:border-box;background:#7e7e7e"></div>
<svg style="position:absolute;left:9.00px;top:439.00px" width="8" height="8"><path d="M0.3 0.6 L6.2 4 L0.3 7.4Z" fill="#1e1e1e"/></svg>
<div class="t" style="left:17.60px;top:438.82px;font-size:8.6px;color:#141414;transform:scaleX(0.9792)">Rigid Body Cache</div>
<svg style="position:absolute;left:410.00px;top:441.00px" width="8" height="4"><rect x="0" y="0" width="1" height="1" fill="#8e8e8e"/><rect x="0" y="2" width="1" height="1" fill="#8e8e8e"/><rect x="2" y="0" width="1" height="1" fill="#8e8e8e"/><rect x="2" y="2" width="1" height="1" fill="#8e8e8e"/><rect x="4" y="0" width="1" height="1" fill="#8e8e8e"/><rect x="4" y="2" width="1" height="1" fill="#8e8e8e"/><rect x="6" y="0" width="1" height="1" fill="#8e8e8e"/><rect x="6" y="2" width="1" height="1" fill="#8e8e8e"/></svg>
<div style="position:absolute;left:3.00px;top:450.30px;width:417.00px;height:1.00px;box-sizing:border-box;background:#505050"></div>
<div style="position:absolute;left:3.00px;top:451.30px;width:417.00px;height:1.00px;box-sizing:border-box;background:#7e7e7e"></div>
<svg style="position:absolute;left:9.00px;top:455.50px" width="8" height="8"><path d="M0.3 0.6 L6.2 4 L0.3 7.4Z" fill="#1e1e1e"/></svg>
<div class="t" style="left:17.60px;top:455.22px;font-size:8.6px;color:#141414;transform:scaleX(0.9842)">Rigid Body Field Weights</div>
<svg style="position:absolute;left:410.00px;top:458.00px" width="8" height="4"><rect x="0" y="0" width="1" height="1" fill="#8e8e8e"/><rect x="0" y="2" width="1" height="1" fill="#8e8e8e"/><rect x="2" y="0" width="1" height="1" fill="#8e8e8e"/><rect x="2" y="2" width="1" height="1" fill="#8e8e8e"/><rect x="4" y="0" width="1" height="1" fill="#8e8e8e"/><rect x="4" y="2" width="1" height="1" fill="#8e8e8e"/><rect x="6" y="0" width="1" height="1" fill="#8e8e8e"/><rect x="6" y="2" width="1" height="1" fill="#8e8e8e"/></svg>
<div style="position:absolute;left:3.00px;top:466.90px;width:417.00px;height:1.00px;box-sizing:border-box;background:#505050"></div>
<div style="position:absolute;left:3.00px;top:467.90px;width:417.00px;height:1.00px;box-sizing:border-box;background:#7e7e7e"></div>
<svg style="position:absolute;left:9.00px;top:472.00px" width="8" height="8"><path d="M-0.2 1.3 L6.7 1.3 L3.25 7.3Z" fill="#1e1e1e"/></svg>
<div style="position:absolute;left:17.00px;top:471.00px;width:10.00px;height:10.00px;box-sizing:border-box;border:1px solid #2a2a2a;border-radius:2px;background:linear-gradient(#555,#404040)"></div>
<div class="t" style="left:31.70px;top:472.02px;font-size:8.6px;color:#141414;transform:scaleX(0.9467)">Simplify</div>
<svg style="position:absolute;left:410.00px;top:474.00px" width="8" height="4"><rect x="0" y="0" width="1" height="1" fill="#8e8e8e"/><rect x="0" y="2" width="1" height="1" fill="#8e8e8e"/><rect x="2" y="0" width="1" height="1" fill="#8e8e8e"/><rect x="2" y="2" width="1" height="1" fill="#8e8e8e"/><rect x="4" y="0" width="1" height="1" fill="#8e8e8e"/><rect x="4" y="2" width="1" height="1" fill="#8e8e8e"/><rect x="6" y="0" width="1" height="1" fill="#8e8e8e"/><rect x="6" y="2" width="1" height="1" fill="#8e8e8e"/></svg>
</div>
</body></html>
